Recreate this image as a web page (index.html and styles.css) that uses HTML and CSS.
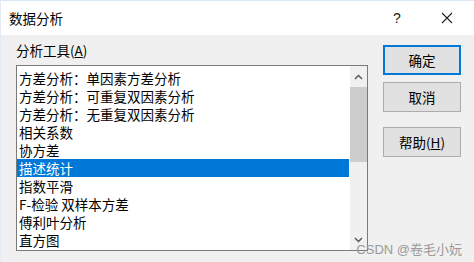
FILE: index.html
```html
<!DOCTYPE html>
<html>
<head>
<meta charset="utf-8">
<link rel="stylesheet" href="styles.css">
</head>
<body>
<div class="window">
  <div class="titlebar">
    <span class="title">数据分析</span>
    <span class="tb-help">?</span>
    <span class="tb-close">
      <svg width="12" height="12" viewBox="0 0 12 12"><path d="M1 1L11 11M11 1L1 11" stroke="#222" stroke-width="1.1" fill="none"/></svg>
    </span>
  </div>
  <div class="content">
    <div class="left">
      <div class="label">分析工具(<u>A</u>)</div>
      <div class="listbox">
        <div class="items">
          <div class="item">方差分析：单因素方差分析</div>
          <div class="item">方差分析：可重复双因素分析</div>
          <div class="item">方差分析：无重复双因素分析</div>
          <div class="item">相关系数</div>
          <div class="item">协方差</div>
          <div class="item selected">描述统计</div>
          <div class="item">指数平滑</div>
          <div class="item">F-检验 双样本方差</div>
          <div class="item">傅利叶分析</div>
          <div class="item">直方图</div>
        </div>
        <div class="scrollbar">
          <div class="arrow">
            <svg width="9" height="6" viewBox="0 0 9 6"><path d="M1 5L4.5 1.5L8 5" stroke="#555" stroke-width="1.4" fill="none"/></svg>
          </div>
          <div class="thumb"></div>
          <div class="track"></div>
          <div class="arrow">
            <svg width="9" height="6" viewBox="0 0 9 6"><path d="M1 1L4.5 4.5L8 1" stroke="#555" stroke-width="1.4" fill="none"/></svg>
          </div>
        </div>
      </div>
    </div>
    <div class="buttons">
      <div class="btn default">确定</div>
      <div class="btn">取消</div>
      <div class="btn help">帮助(<u>H</u>)</div>
    </div>
  </div>
  <div class="watermark">CSDN @卷毛小妧</div>
</div>
</body>
</html>
```
FILE: styles.css
```css
html, body {
  margin: 0;
  padding: 0;
}
body {
  width: 474px;
  height: 262px;
  overflow: hidden;
  font-family: "Noto Sans CJK SC", "Liberation Sans", sans-serif;
  font-size: 13.5px;
  color: #000;
}
.window {
  position: relative;
  width: 474px;
  height: 262px;
  background: #f0f0f0;
  border-top: 1px solid #dbe7f3;
  border-left: 1px solid #e3ecf5;
  box-sizing: border-box;
}
.titlebar {
  height: 34px;
  background: #fff;
  display: flex;
  align-items: center;
  padding-left: 8px;
}
.title {
  flex: 1;
  line-height: 18px;
}
.tb-help {
  width: 20px;
  text-align: center;
  font-family: "Liberation Sans", sans-serif;
  font-size: 14px;
  margin-right: 34px;
  color: #222;
}
.tb-close {
  width: 14px;
  display: flex;
  margin-right: 19px;
}
.content {
  display: flex;
  padding: 5px 0 0 15px;
}
.left {
  width: 352px;
  display: flex;
  flex-direction: column;
}
.label {
  line-height: 20px;
  height: 20px;
  margin-bottom: 5px;
}
.listbox {
  height: 186px;
  border: 1px solid #7a7a7a;
  background: #fff;
  box-sizing: border-box;
  display: flex;
}
.items {
  flex: 1;
  padding-top: 3px;
}
.item {
  height: 18px;
  line-height: 18px;
  padding-left: 2px;
  white-space: nowrap;
  margin-right: 1px;
}
.item.selected {
  background: #0078d7;
  color: #fff;
}
.scrollbar {
  width: 17px;
  background: #f0f0f0;
  display: flex;
  flex-direction: column;
}
.arrow {
  height: 21px;
  display: flex;
  align-items: center;
  justify-content: center;
}
.thumb {
  height: 75px;
  margin: 0 0;
  background: #cdcdcd;
}
.track {
  flex: 1;
}
.buttons {
  margin-left: 15px;
  margin-top: 5px;
  display: flex;
  flex-direction: column;
  width: 78px;
}
.btn {
  height: 30px;
  box-sizing: border-box;
  border: 1px solid #adadad;
  background: #e1e1e1;
  display: flex;
  align-items: center;
  justify-content: center;
  margin-bottom: 7px;
}
.btn.default {
  border: 2px solid #0078d7;
}
.btn.help {
  margin-top: 8px;
}
.watermark {
  position: absolute;
  right: 12px;
  bottom: 4px;
  font-size: 13px;
  color: #9a9a9a;
  font-family: "Liberation Sans", "Noto Sans CJK SC", sans-serif;
  line-height: 16px;
}
```
